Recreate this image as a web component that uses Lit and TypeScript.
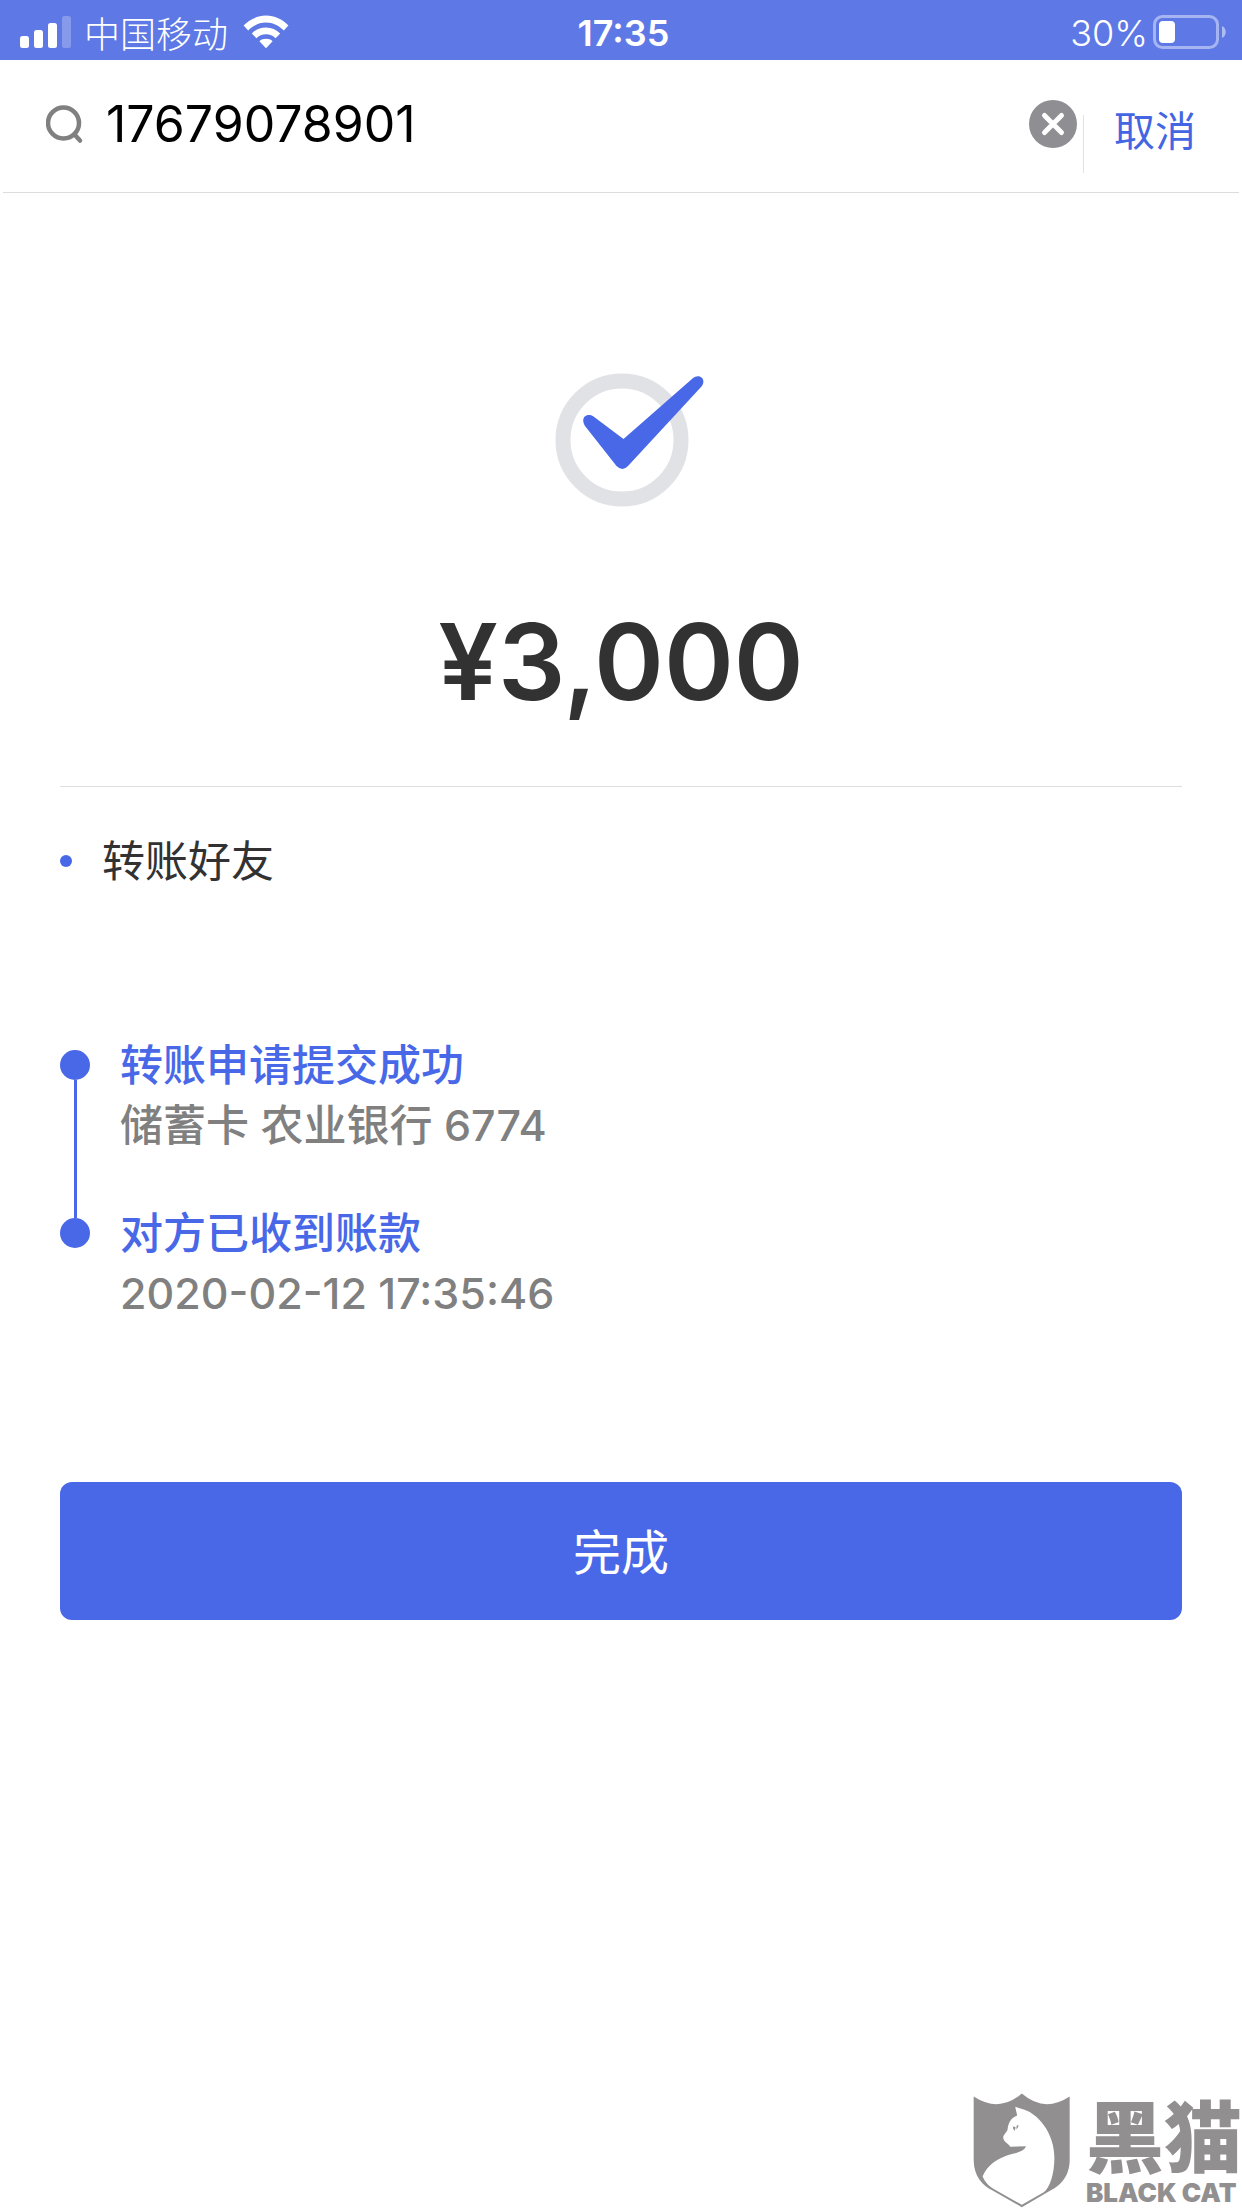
import { LitElement, html, css, svg, nothing } from "lit";
import { customElement, property, state } from "lit/decorators.js";

interface Step {
  title: string;
  detail: string;
}

const STEPS: Step[] = [
  { title: "转账申请提交成功", detail: "储蓄卡 农业银行 6774" },
  { title: "对方已收到账款", detail: "2020-02-12 17:35:46" },
];

const SIGNAL_HEIGHTS = [12, 18, 25, 32];

@customElement("status-bar")
class StatusBar extends LitElement {
  @property() carrier = "";
  @property() time = "";
  @property({ type: Number }) battery = 0;

  static styles = css`
    :host {
      display: grid;
      grid-template-columns: 1fr auto 1fr;
      align-items: center;
      height: 60px;
      padding: 0 15px 0 20px;
      background: #5e79e6;
      color: #fff;
      font-size: 36px;
      line-height: 62px;
    }
    .side {
      display: flex;
      align-items: center;
    }
    .end {
      justify-content: flex-end;
      gap: 5px;
    }
    .carrier {
      font-family: "Noto Sans CJK SC", sans-serif;
      font-weight: 300;
      line-height: 56px;
      margin: 0 15px 0 12px;
    }
    .time {
      font-weight: 600;
      padding-top: 2px;
    }
    .percent {
      font-weight: 300;
      padding-top: 2px;
    }
    svg {
      display: block;
    }
  `;

  render() {
    return html`
      <div class="side">
        <svg width="52" height="32" viewBox="0 0 52 32" fill="#fff" aria-hidden="true">
          ${SIGNAL_HEIGHTS.map(
            (h, i) =>
              svg`<rect x=${i * 14} y=${32 - h} width="9" height=${h} rx="2.5" opacity=${i === 3 ? 0.25 : 1}></rect>`
          )}
        </svg>
        <span class="carrier">${this.carrier}</span>
        <svg width="46" height="34" viewBox="0 0 46 34" fill="#fff" aria-hidden="true">
          <path d="M0.6 10.6C6.6 4.4 14.4 0.6 23 0.6s16.400 3.800 22.400 10l-4.600 5C36 10.600 30 7.600 23 7.600S10 10.600 5.200 15.600z"></path>
          <path d="M8.800 18.400C12.600 14.600 17.400 12.400 23 12.400s10.400 2.200 14.200 6l-4.600 4.800C30 20.600 26.800 19.200 23 19.200s-7 1.400-9.600 4z"></path>
          <path d="M16.400 26.200C18.200 24.600 20.400 23.800 23 23.800s4.800.8 6.600 2.400L23 33.200z"></path>
        </svg>
      </div>
      <span class="time">${this.time}</span>
      <div class="side end">
        <span class="percent">${this.battery}%</span>
        <svg width="74" height="34" viewBox="0 0 74 34" aria-hidden="true">
          <rect x="1.500" y="1.500" width="63" height="31" rx="8" fill="none" stroke="#fff" stroke-opacity=".45" stroke-width="3"></rect>
          <rect x="6" y="6" width="16" height="22" rx="4" fill="#fff"></rect>
          <path d="M69 11C74 13 74 21 69 23z" fill="#fff" fill-opacity=".5"></path>
        </svg>
      </div>
    `;
  }
}

@customElement("search-header")
class SearchHeader extends LitElement {
  @property() value = "";

  static styles = css`
    :host {
      display: flex;
      align-items: center;
      height: 128px;
      margin: 0 3px;
      padding: 0 43px 4px;
      border-bottom: 1px solid #dcdcdc;
    }
    .icon {
      flex: none;
      margin-right: 22px;
    }
    .field {
      flex: 1;
      min-width: 0;
      border: 0;
      outline: 0;
      padding: 0;
      background: none;
      color: #000;
      font-family: inherit;
      font-size: 50px;
      line-height: 64px;
      height: 64px;
    }
    .clear {
      flex: none;
      border: 0;
      padding: 0;
      background: none;
      margin-right: 6px;
    }
    .cancel {
      border: 0;
      border-left: 1px solid #e2e2e2;
      margin-top: 40px;
      padding: 0 0 32px 30px;
      background: none;
      color: #4466e2;
      font-family: "Noto Sans CJK SC", sans-serif;
      font-size: 41px;
      line-height: 26px;
      height: 58px;
    }
    svg {
      display: block;
    }
  `;

  private clear() {
    this.value = "";
  }

  render() {
    return html`
      <svg class="icon" width="38" height="40" viewBox="0 0 38 40" fill="none" stroke="#808080" aria-hidden="true">
        <circle cx="17.500" cy="19" r="15.500" stroke-width="4.500"></circle>
        <path d="M28.500 30.500L34 36.500" stroke-width="4.500" stroke-linecap="round"></path>
      </svg>
      <input class="field" type="text" aria-label="搜索" .value=${this.value} />
      <button class="clear" aria-label="清除" @click=${this.clear}>
        <svg width="48" height="48" viewBox="0 0 48 48" aria-hidden="true">
          <circle cx="24" cy="24" r="24" fill="#8e8e93"></circle>
          <path d="M15.500 15.500l17 17M32.500 15.500l-17 17" stroke="#fff" stroke-width="5" stroke-linecap="round"></path>
        </svg>
      </button>
      <button class="cancel">取消</button>
    `;
  }
}

@customElement("transfer-steps")
class TransferSteps extends LitElement {
  @property({ attribute: false }) steps: Step[] = [];

  static styles = css`
    :host {
      display: block;
    }
    .list {
      list-style: none;
      margin: 0;
      padding: 0;
    }
    .step {
      display: flex;
      gap: 30px;
    }
    .rail {
      display: flex;
      flex-direction: column;
      align-items: center;
      width: 30px;
    }
    .lead {
      width: 3px;
      height: 15px;
    }
    .dot {
      width: 30px;
      height: 30px;
      border-radius: 50%;
      background: #4868e8;
    }
    .tail {
      width: 3px;
      flex: 1;
    }
    .on {
      background: #4868e8;
    }
    .body {
      padding-bottom: 48px;
      font-size: 43px;
      font-weight: 500;
      line-height: 60px;
    }
    .title {
      color: #4868e8;
    }
    .detail {
      color: #808080;
    }
  `;

  render() {
    const last = this.steps.length - 1;
    return html`
      <ol class="list">
        ${this.steps.map(
          (step, i) => html`
            <li class="step">
              <div class="rail">
                <span class="lead ${i > 0 ? "on" : ""}"></span>
                <span class="dot"></span>
                ${i < last ? html`<span class="tail on"></span>` : nothing}
              </div>
              <div class="body">
                <div class="title">${step.title}</div>
                <div class="detail">${step.detail}</div>
              </div>
            </li>
          `
        )}
      </ol>
    `;
  }
}

@customElement("brand-mark")
class BrandMark extends LitElement {
  static styles = css`
    :host {
      display: flex;
      align-items: flex-end;
      gap: 16px;
      color: #918f90;
    }
    .words {
      display: flex;
      flex-direction: column;
    }
    .name {
      font-family: "Noto Sans CJK SC", sans-serif;
      font-size: 78px;
      font-weight: 900;
      line-height: 78px;
      padding-bottom: 6px;
    }
    .latin {
      font-size: 26px;
      font-weight: 900;
      line-height: 30px;
      white-space: nowrap;
    }
    svg {
      display: block;
    }
  `;

  render() {
    return html`
      <svg width="97" height="115" viewBox="99 68 292 345" aria-hidden="true">
        <path fill="#918f90" d="M101 78Q178 128 246 69Q314 128 390 78V268C390 318 362 345 332 361L246 411L158 361C128 345 101 318 101 268Z"></path>
        <path fill="#fff" d="M226 109L239 113C296 124 344 190 344 262C344 312 330 352 312 366L246 404L160 356C142 344 132 330 128 318C142 284 174 262 216 251C238 246 252 242 259 228L211 229C206 218 190 214 190 201C190 194 197 190 203 178C205 156 214 142 232 135Z"></path>
        <path fill="#918f90" d="M219 168L227 170L225 182Q219 178 219 168ZM230 166L236 164Q236 172 230 177Z"></path>
      </svg>
      <div class="words">
        <span class="name">黑猫</span>
        <span class="latin">BLACK CAT</span>
      </div>
    `;
  }
}

@customElement("app-root")
class AppRoot extends LitElement {
  @state() private steps = STEPS;

  static styles = css`
    :host {
      display: flex;
      flex-direction: column;
      min-height: 100vh;
      background: #fff;
      color: #323233;
      font-family: Inter, "Noto Sans CJK SC", sans-serif;
    }
    .main {
      padding: 0 60px;
    }
    .result {
      display: flex;
      flex-direction: column;
      align-items: center;
      padding: 180px 0 62px;
      border-bottom: 1px solid #dedede;
    }
    .check {
      display: block;
      margin-left: 18px;
    }
    .amount {
      margin: 92px 0 0;
      font-size: 106px;
      font-weight: 600;
      line-height: 124px;
    }
    .items {
      list-style: none;
      margin: 0;
      padding: 44px 0 0;
    }
    .item {
      display: flex;
      align-items: center;
      gap: 30px;
      font-size: 43px;
      line-height: 60px;
    }
    .bullet {
      width: 12px;
      height: 12px;
      border-radius: 50%;
      background: #4868e8;
    }
    .steps {
      margin-top: 144px;
    }
    .done {
      display: block;
      width: 100%;
      height: 138px;
      margin-top: 111px;
      border: 0;
      border-radius: 12px;
      padding: 0 0 4px;
      background: #4868e8;
      color: #fff;
      font-family: "Noto Sans CJK SC", sans-serif;
      font-size: 48px;
    }
    .brand {
      align-self: flex-end;
      margin-top: auto;
    }
  `;

  render() {
    return html`
      <status-bar carrier="中国移动" time="17:35" battery="30"></status-bar>
      <search-header value="17679078901"></search-header>
      <main class="main">
        <section class="result">
          <svg class="check" width="150" height="135" viewBox="0 0 150 135" aria-hidden="true">
            <circle cx="67" cy="67" r="59" fill="none" stroke="#e1e2e6" stroke-width="15"></circle>
            <path
              fill="#4868e8"
              d="M38.500 43.500L68.500 66L137.500 5.500C144.500 -0.500 152 6.500 146.500 13.500L73 93Q67.500 99 61.500 93L30 53C25 45 31.500 39 38.500 43.500Z"
            ></path>
          </svg>
          <h1 class="amount">¥3,000</h1>
        </section>
        <ul class="items">
          <li class="item"><span class="bullet"></span>转账好友</li>
        </ul>
        <transfer-steps class="steps" .steps=${this.steps}></transfer-steps>
        <button class="done">完成</button>
      </main>
      <brand-mark class="brand"></brand-mark>
    `;
  }
}
